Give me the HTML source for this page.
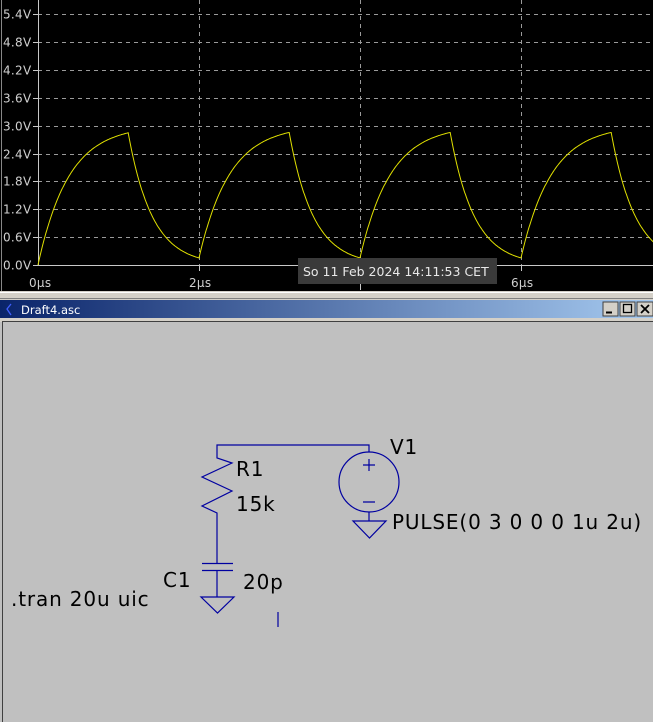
<!DOCTYPE html>
<html><head><meta charset="utf-8"><style>
html,body{margin:0;padding:0;width:653px;height:722px;overflow:hidden;background:#c0c0c0;font-family:"DejaVu Sans","Liberation Sans",sans-serif}
svg{position:absolute;left:0;top:0}
</style></head><body>
<svg width="653" height="722" xmlns="http://www.w3.org/2000/svg">
<rect x="0" y="0" width="653" height="291" fill="#000"/>
<line x1="1.5" y1="0" x2="1.5" y2="291" stroke="#888" stroke-width="1"/>
<g stroke="#9a9a9a" stroke-width="1" stroke-dasharray="4,4" id="grid"></g>
<line x1="38.5" y1="0" x2="38.5" y2="265" stroke="#c8c8c8"/>
<line x1="38" y1="265.5" x2="653" y2="265.5" stroke="#c8c8c8"/>
<g font-family="DejaVu Sans, sans-serif" font-size="12" letter-spacing="0.3" fill="#d0d0d0" id="lbl"></g>
<path id="wave" fill="none" stroke="#e0e000" stroke-width="1"/>
<rect x="298" y="258" width="199" height="26" fill="#3a3a3a"/>
<text x="303" y="276" font-size="12.5" fill="#e8e8e8" font-family="DejaVu Sans, sans-serif">So 11 Feb 2024 14:11:53 CET</text>
<line x1="360.5" y1="284" x2="360.5" y2="290" stroke="#c8c8c8"/>
<rect x="0" y="291" width="653" height="9" fill="#d4d0c8"/>
<line x1="0" y1="292.5" x2="653" y2="292.5" stroke="#fff"/>
<line x1="0" y1="298.5" x2="653" y2="298.5" stroke="#808080"/>
<defs><linearGradient id="tb" x1="0" x2="1"><stop offset="0" stop-color="#0a246a"/><stop offset="1" stop-color="#a6caf0"/></linearGradient></defs>
<rect x="0" y="300" width="653" height="18" fill="url(#tb)"/>
<path d="M11 304 L7 309 L11 315" stroke="#4060ff" fill="none" stroke-width="1.3"/>
<text x="21" y="314" font-size="11.5" fill="#fff" font-family="DejaVu Sans, sans-serif">Draft4.asc</text>
<g font-family="DejaVu Sans, sans-serif">
<rect x="603" y="302" width="15" height="14" fill="#d4d0c8" stroke="#404040"/>
<line x1="606" y1="312.5" x2="612" y2="312.5" stroke="#000" stroke-width="2"/>
<rect x="620" y="302" width="15" height="14" fill="#d4d0c8" stroke="#404040"/>
<rect x="623.5" y="304.5" width="8" height="8" fill="none" stroke="#000" stroke-width="1.3"/>
<rect x="637" y="302" width="16" height="14" fill="#d4d0c8" stroke="#404040"/>
<path d="M641 305 L649 313 M649 305 L641 313" stroke="#000" stroke-width="1.8"/>
</g>
<rect x="0" y="318" width="653" height="4" fill="#d4d0c8"/>
<line x1="2.5" y1="322" x2="2.5" y2="722" stroke="#404040"/>
<line x1="2" y1="321.5" x2="653" y2="321.5" stroke="#404040"/>
<g stroke="#0000a0" stroke-width="1.2" fill="none">
<path d="M217 452 V445 H369 V452"/>
<path d="M217 452 V458 L232 463 L202 477 L232 491 L202 506 L217 513 V563"/>
<path d="M202 563.5 H233 M202 570.5 H233 M217 570 V597"/>
<path d="M201 597 H234 L217.5 613 Z"/>
<circle cx="369" cy="482" r="30"/>
<path d="M369 459 V471 M363 465 H375 M363 502 H375 M369 512 V521"/>
<path d="M353 521 H386 L369.5 538 Z"/>
<path d="M278 612 V627"/>
</g>
<g font-family="DejaVu Sans, sans-serif" font-size="20" letter-spacing="0.85" fill="#000">
<text x="390" y="454">V1</text>
<text x="236" y="476">R1</text>
<text x="236" y="511">15k</text>
<text x="392" y="529">PULSE(0 3 0 0 0 1u 2u)</text>
<text x="163" y="587">C1</text>
<text x="243" y="589">20p</text>
<text x="11" y="606">.tran 20u uic</text>
</g>
</svg>
<script>
var ns="http://www.w3.org/2000/svg";
var g=document.getElementById('grid'),l=document.getElementById('lbl');
var labs=["5.4V","4.8V","4.2V","3.6V","3.0V","2.4V","1.8V","1.2V","0.6V","0.0V"];
for(var i=0;i<10;i++){var y=Math.round(14+i*27.9)+0.5;
 if(i<9){var ln=document.createElementNS(ns,'line');ln.setAttribute('x1',38);ln.setAttribute('x2',653);ln.setAttribute('y1',y);ln.setAttribute('y2',y);g.appendChild(ln);}
 var tk=document.createElementNS(ns,'line');tk.setAttribute('x1',33);tk.setAttribute('x2',38);tk.setAttribute('y1',y);tk.setAttribute('y2',y);tk.setAttribute('stroke','#c8c8c8');l.appendChild(tk);
 var t=document.createElementNS(ns,'text');t.setAttribute('x',3);t.setAttribute('y',y+4);t.textContent=labs[i];l.appendChild(t);}
[199.5,360.5,521.5].forEach(function(x){var ln=document.createElementNS(ns,'line');ln.setAttribute('x1',x);ln.setAttribute('x2',x);ln.setAttribute('y1',0);ln.setAttribute('y2',265);g.appendChild(ln);
 var tk=document.createElementNS(ns,'line');tk.setAttribute('x1',x);tk.setAttribute('x2',x);tk.setAttribute('y1',265);tk.setAttribute('y2',271);tk.setAttribute('stroke','#c8c8c8');l.appendChild(tk);});
[[29,"0µs"],[189,"2µs"],[511,"6µs"]].forEach(function(a){var t=document.createElementNS(ns,'text');t.setAttribute('x',a[0]);t.setAttribute('y',287);t.textContent=a[1];l.appendChild(t);});
var d="",v0=0,first=true;
for(var k=0;k<5;k++){
 for(var s=0;s<=200;s++){var t=s/100,v;
  if(t<=1.12){v=3-(3-v0)*Math.exp(-t/0.38);}else{var vpk=3-(3-v0)*Math.exp(-1.12/0.38);v=vpk*Math.exp(-(t-1.12)/0.3);}
  var x=38+(k*2+t)*80.5,y=265-v*46.5;
  if(x>660)break;
  d+=(first?"M":"L")+x.toFixed(1)+" "+y.toFixed(1);first=false;}
 v0=(3-(3-v0)*Math.exp(-1.12/0.38))*Math.exp(-0.88/0.3);}
document.getElementById('wave').setAttribute('d',d);
</script>
</body></html>
